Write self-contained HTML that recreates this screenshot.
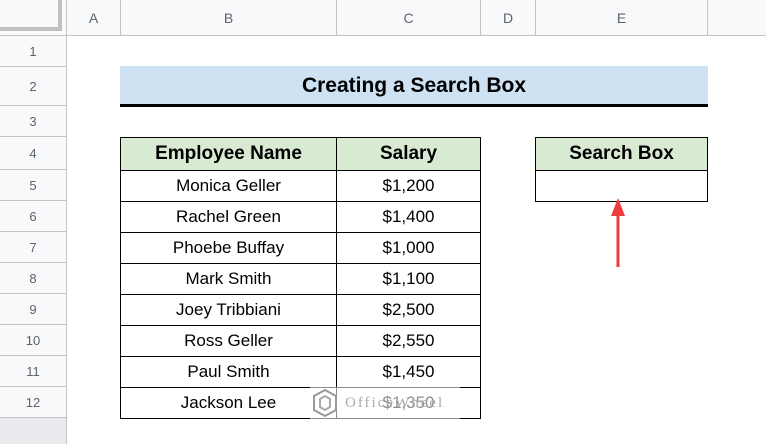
<!DOCTYPE html><html><head><style>
body{margin:0;width:766px;height:444px;overflow:hidden;background:#fff;font-family:"Liberation Sans",Arial,sans-serif;position:relative}
div{position:absolute;box-sizing:border-box}
.ch{top:0;height:36px;background:#f8f9fa;border-right:1px solid #c4c4c4;border-bottom:1px solid #c4c4c4;color:#5f6368;font-size:14px;text-align:center;line-height:36px}
.rh{left:0;width:67px;background:#f8f9fa;border-right:1px solid #c4c4c4;border-bottom:1px solid #c4c4c4;color:#5f6368;font-size:13px;text-align:center}
.c{border:1px solid #000;text-align:center;font-size:17px;color:#000}
.h{background:#d9ead3;font-weight:bold;font-size:19px}
</style></head><body>
<div style="left:0;top:0;width:67px;height:36px;background:#f8f9fa;border-right:1px solid #c4c4c4;border-bottom:1px solid #c4c4c4"></div>
<div style="left:0;top:27px;width:62px;height:4px;background:#c0c0c0"></div>
<div style="left:58px;top:0;width:4px;height:31px;background:#c0c0c0"></div>
<div class="ch" style="left:67px;width:54px">A</div>
<div class="ch" style="left:121px;width:216px">B</div>
<div class="ch" style="left:337px;width:144px">C</div>
<div class="ch" style="left:481px;width:55px">D</div>
<div class="ch" style="left:536px;width:172px">E</div>
<div class="ch" style="left:708px;width:58px;border-right:none"></div>
<div class="rh" style="top:36px;height:31px;line-height:31px">1</div>
<div class="rh" style="top:67px;height:39px;line-height:39px">2</div>
<div class="rh" style="top:106px;height:31px;line-height:31px">3</div>
<div class="rh" style="top:137px;height:33px;line-height:33px">4</div>
<div class="rh" style="top:170px;height:31px;line-height:31px">5</div>
<div class="rh" style="top:201px;height:31px;line-height:31px">6</div>
<div class="rh" style="top:232px;height:31px;line-height:31px">7</div>
<div class="rh" style="top:263px;height:31px;line-height:31px">8</div>
<div class="rh" style="top:294px;height:31px;line-height:31px">9</div>
<div class="rh" style="top:325px;height:31px;line-height:31px">10</div>
<div class="rh" style="top:356px;height:31px;line-height:31px">11</div>
<div class="rh" style="top:387px;height:31px;line-height:31px">12</div>
<div style="left:0;top:418px;width:67px;height:26px;background:#e8eaed;border-right:1px solid #c4c4c4"></div>

<div style="left:120px;top:66px;width:588px;height:38px;background:#cfe2f3;font-weight:bold;font-size:21px;text-align:center;line-height:40px">Creating a Search Box</div>
<div style="left:120px;top:104px;width:588px;height:3px;background:#000"></div>

<div class="c h" style="left:120px;top:137px;width:217px;height:34px;line-height:32px">Employee Name</div>
<div class="c h" style="left:336px;top:137px;width:145px;height:34px;line-height:32px">Salary</div>
<div class="c" style="left:120px;top:170px;width:217px;height:32px;line-height:30px">Monica Geller</div>
<div class="c" style="left:336px;top:170px;width:145px;height:32px;line-height:30px">$1,200</div>
<div class="c" style="left:120px;top:201px;width:217px;height:32px;line-height:30px">Rachel Green</div>
<div class="c" style="left:336px;top:201px;width:145px;height:32px;line-height:30px">$1,400</div>
<div class="c" style="left:120px;top:232px;width:217px;height:32px;line-height:30px">Phoebe Buffay</div>
<div class="c" style="left:336px;top:232px;width:145px;height:32px;line-height:30px">$1,000</div>
<div class="c" style="left:120px;top:263px;width:217px;height:32px;line-height:30px">Mark Smith</div>
<div class="c" style="left:336px;top:263px;width:145px;height:32px;line-height:30px">$1,100</div>
<div class="c" style="left:120px;top:294px;width:217px;height:32px;line-height:30px">Joey Tribbiani</div>
<div class="c" style="left:336px;top:294px;width:145px;height:32px;line-height:30px">$2,500</div>
<div class="c" style="left:120px;top:325px;width:217px;height:32px;line-height:30px">Ross Geller</div>
<div class="c" style="left:336px;top:325px;width:145px;height:32px;line-height:30px">$2,550</div>
<div class="c" style="left:120px;top:356px;width:217px;height:32px;line-height:30px">Paul Smith</div>
<div class="c" style="left:336px;top:356px;width:145px;height:32px;line-height:30px">$1,450</div>
<div class="c" style="left:120px;top:387px;width:217px;height:32px;line-height:30px">Jackson Lee</div>
<div class="c" style="left:336px;top:387px;width:145px;height:32px;line-height:30px">$1,350</div>

<div class="c h" style="left:535px;top:137px;width:173px;height:34px;line-height:32px">Search Box</div>
<div class="c" style="left:535px;top:170px;width:173px;height:32px"></div>

<svg style="position:absolute;left:606px;top:195px" width="24" height="75"><path d="M12 10V72" stroke="#ee3b3b" stroke-width="3"/><path d="M5 21L12 3L19 21Z" fill="#ee3b3b"/></svg>

<div style="left:310px;top:387px;width:150px;height:32px;background:rgba(255,255,255,.55)"></div>
<svg style="position:absolute;left:312px;top:388px" width="26" height="30"><path d="M13 2L24 8V22L13 28L2 22V8Z" fill="none" stroke="#999" stroke-width="2"/><path d="M13 8L18 11V19L13 22L8 19V11Z" fill="none" stroke="#aaa" stroke-width="2"/></svg>
<div style="left:345px;top:395px;font-family:'Liberation Serif',serif;font-size:15px;letter-spacing:2px;color:#aaa">OfficeWheel</div>
</body></html>
